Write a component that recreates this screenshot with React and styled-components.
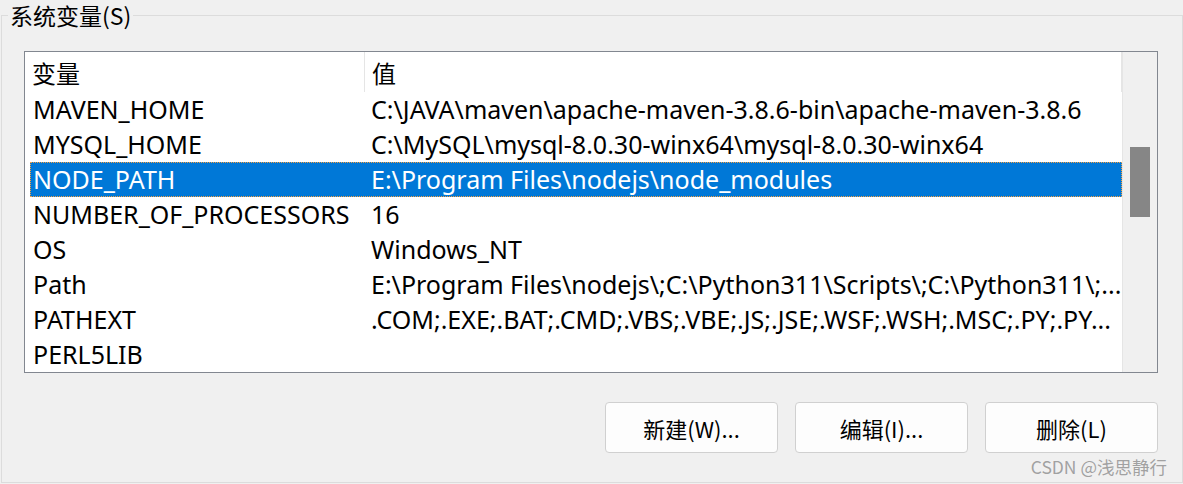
import React from 'react';
import styled, { createGlobalStyle } from 'styled-components';

const GlobalStyle = createGlobalStyle`
  html, body {
    margin: 0;
    padding: 0;
    background: #f0f0f0;
  }
  body {
    width: 1183px;
    height: 484px;
    overflow: hidden;
    font-family: "Noto Sans", "Noto Sans CJK SC", sans-serif;
    color: #000;
  }
`;

const Page = styled.div`
  position: relative;
  width: 1183px;
  height: 484px;
  display: flex;
`;

const Group = styled.fieldset`
  box-sizing: border-box;
  margin: 1px 0 1px 1px;
  flex: 1;
  border: 1px solid #dcdcdc;
  padding: 22px 24px 0 22px;
  min-width: 0;
`;

const Legend = styled.legend`
  font-size: 23px;
  line-height: 28px;
  padding: 0 2px;
  margin-left: -16px;
  font-family: "Noto Sans CJK SC", "Noto Sans", sans-serif;
`;

const ListBox = styled.div`
  display: flex;
  height: 322px;
  box-sizing: border-box;
  border: 1px solid #828790;
  background: #fff;
`;

const ListBody = styled.div`
  flex: 1;
  display: flex;
  flex-direction: column;
  min-width: 0;
`;

const Header = styled.div`
  display: grid;
  grid-template-columns: 340px 1fr;
  height: 40px;
  flex: none;
`;

const HeaderCell = styled.div`
  display: flex;
  align-items: center;
  padding-left: 7px;
  font-size: 24px;
  font-family: "Noto Sans CJK SC", "Noto Sans", sans-serif;
  border-right: 1px solid #e5e5e5;
`;

const Row = styled.div`
  display: grid;
  grid-template-columns: 335px 1fr;
  height: 35px;
  box-sizing: border-box;
  margin-left: 5px;
  font-size: 25px;
  line-height: 33px;
  white-space: nowrap;
  background: ${p => (p.$selected ? '#0078d7' : 'transparent')};
  color: ${p => (p.$selected ? '#fff' : '#000')};
  border: 1px ${p => (p.$selected ? 'dotted #f5a040' : 'solid transparent')};
`;

const Cell = styled.div`
  overflow: hidden;
  padding-left: ${p => p.$pad}px;
`;

const ScrollTrack = styled.div`
  width: 34px;
  flex: none;
  background: #f0f0f0;
  border-left: 1px solid #e5e5e5;
  display: flex;
  flex-direction: column;
  align-items: center;
`;

const Thumb = styled.div`
  width: 20px;
  height: 70px;
  margin-top: 95px;
  background: #868686;
`;

const Buttons = styled.div`
  display: flex;
  justify-content: flex-end;
  gap: 17px;
  margin-top: 29px;
`;

const Button = styled.button`
  width: 173px;
  height: 51px;
  box-sizing: border-box;
  background: #fdfdfd;
  border: 1px solid #d0d0d0;
  border-radius: 4px;
  font-family: "Noto Sans CJK SC", "Noto Sans", sans-serif;
  font-size: 22px;
  color: #000;
  padding: 0;
`;

const Watermark = styled.div`
  position: absolute;
  right: 16px;
  bottom: 5px;
  font-family: "Noto Sans CJK SC", "Noto Sans", sans-serif;
  font-size: 17.5px;
  color: rgba(140, 140, 140, 0.8);
`;

const rows = [
  ['MAVEN_HOME', 'C:\\JAVA\\maven\\apache-maven-3.8.6-bin\\apache-maven-3.8.6'],
  ['MYSQL_HOME', 'C:\\MySQL\\mysql-8.0.30-winx64\\mysql-8.0.30-winx64'],
  ['NODE_PATH', 'E:\\Program Files\\nodejs\\node_modules'],
  ['NUMBER_OF_PROCESSORS', '16'],
  ['OS', 'Windows_NT'],
  ['Path', 'E:\\Program Files\\nodejs\\;C:\\Python311\\Scripts\\;C:\\Python311\\;...'],
  ['PATHEXT', '.COM;.EXE;.BAT;.CMD;.VBS;.VBE;.JS;.JSE;.WSF;.WSH;.MSC;.PY;.PY...'],
  ['PERL5LIB', ''],
];

export default function App() {
  return (
    <Page>
      <GlobalStyle />
      <Group>
        <Legend>系统变量(S)</Legend>
        <ListBox>
          <ListBody>
            <Header>
              <HeaderCell>变量</HeaderCell>
              <HeaderCell>值</HeaderCell>
            </Header>
            {rows.map(([name, value]) => (
              <Row key={name} $selected={name === 'NODE_PATH'}>
                <Cell $pad={2}>{name}</Cell>
                <Cell $pad={5}>{value}</Cell>
              </Row>
            ))}
          </ListBody>
          <ScrollTrack>
            <Thumb />
          </ScrollTrack>
        </ListBox>
        <Buttons>
          <Button>新建(W)...</Button>
          <Button>编辑(I)...</Button>
          <Button>删除(L)</Button>
        </Buttons>
      </Group>
      <Watermark>CSDN @浅思静行</Watermark>
    </Page>
  );
}
